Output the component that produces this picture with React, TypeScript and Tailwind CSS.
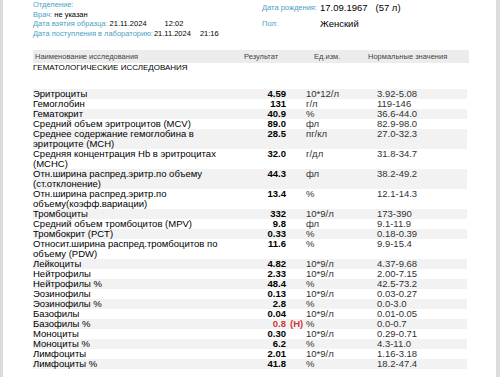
import React from 'react';

type Row = { name: string[]; value: string; flag?: string; unit: string; norm: string };

const rows: Row[] = [
  { name: ['Эритроциты'], value: '4.59', unit: '10*12/л', norm: '3.92-5.08' },
  { name: ['Гемоглобин'], value: '131', unit: 'г/л', norm: '119-146' },
  { name: ['Гематокрит'], value: '40.9', unit: '%', norm: '36.6-44.0' },
  { name: ['Средний объем эритроцитов (MCV)'], value: '89.0', unit: 'фл', norm: '82.9-98.0' },
  { name: ['Среднее содержание гемоглобина в', 'эритроците (MCH)'], value: '28.5', unit: 'пг/кл', norm: '27.0-32.3' },
  { name: ['Средняя концентрация Hb в эритроцитах', '(MCHC)'], value: '32.0', unit: 'г/дл', norm: '31.8-34.7' },
  { name: ['Отн.ширина распред.эритр.по объему', '(ст.отклонение)'], value: '44.3', unit: 'фл', norm: '38.2-49.2' },
  { name: ['Отн.ширина распред.эритр.по', 'объему(коэфф.вариации)'], value: '13.4', unit: '%', norm: '12.1-14.3' },
  { name: ['Тромбоциты'], value: '332', unit: '10*9/л', norm: '173-390' },
  { name: ['Средний объем тромбоцитов (MPV)'], value: '9.8', unit: 'фл', norm: '9.1-11.9' },
  { name: ['Тромбокрит (PCT)'], value: '0.33', unit: '%', norm: '0.18-0.39' },
  { name: ['Относит.ширина распред.тромбоцитов по', 'объему (PDW)'], value: '11.6', unit: '%', norm: '9.9-15.4' },
  { name: ['Лейкоциты'], value: '4.82', unit: '10*9/л', norm: '4.37-9.68' },
  { name: ['Нейтрофилы'], value: '2.33', unit: '10*9/л', norm: '2.00-7.15' },
  { name: ['Нейтрофилы %'], value: '48.4', unit: '%', norm: '42.5-73.2' },
  { name: ['Эозинофилы'], value: '0.13', unit: '10*9/л', norm: '0.03-0.27' },
  { name: ['Эозинофилы %'], value: '2.8', unit: '%', norm: '0.0-3.0' },
  { name: ['Базофилы'], value: '0.04', unit: '10*9/л', norm: '0.01-0.05' },
  { name: ['Базофилы %'], value: '0.8', flag: '(H)', unit: '%', norm: '0.0-0.7' },
  { name: ['Моноциты'], value: '0.30', unit: '10*9/л', norm: '0.29-0.71' },
  { name: ['Моноциты %'], value: '6.2', unit: '%', norm: '4.3-11.0' },
  { name: ['Лимфоциты'], value: '2.01', unit: '10*9/л', norm: '1.16-3.18' },
  { name: ['Лимфоциты %'], value: '41.8', unit: '%', norm: '18.2-47.4' },
];

const Label = ({ children }: { children: React.ReactNode }) => (
  <span className="text-[#4a9ec4] whitespace-nowrap">{children}</span>
);

export default function App() {
  return (
    <div className="flex w-[500px] h-[377px] bg-white overflow-hidden text-black font-['Liberation_Sans',Arial,sans-serif]">
      <div className="w-[3px] bg-[#dcdcdc]" />
      <div className="flex-1 pl-[30px] pr-[26px]">
        {/* patient header */}
        <div className="flex h-[38px] text-[7.5px] leading-[9.5px]">
          <div className="w-[229px]">
            <div><Label>Отделение:</Label></div>
            <div><Label>Врач:</Label> не указан</div>
            <div className="flex whitespace-nowrap">
              <Label>Дата взятия образца:</Label>
              <span className="ml-[2px]">21.11.2024</span>
              <span className="ml-[18px]">12:02</span>
            </div>
            <div className="flex whitespace-nowrap">
              <Label>Дата поступления в лабораторию:</Label>
              <span className="ml-[1px]">21.11.2024</span>
              <span className="ml-[9px]">21:16</span>
            </div>
          </div>
          <div className="pt-[1px]">
            <div className="flex items-center h-[13px]">
              <span className="w-[58px]"><Label>Дата рождения:</Label></span>
              <span className="text-[9.5px] whitespace-nowrap">17.09.1967&nbsp;&nbsp;&nbsp;(57 л)</span>
            </div>
            <div className="flex items-center h-[13px] mt-[3px]">
              <span className="w-[58px]"><Label>Пол:</Label></span>
              <span className="text-[9.5px]">Женский</span>
            </div>
          </div>
        </div>

        {/* table header */}
        <div className="mt-[12px] w-[436px] h-[13px] flex items-center bg-[#ececec] text-[7.5px] text-[#444] whitespace-nowrap">
          <span className="w-[211px] pl-[2px]">Наименование исследования</span>
          <span className="w-[70px]">Результат</span>
          <span className="w-[54px]">Ед.изм.</span>
          <span>Нормальные значения</span>
        </div>
        <div className="text-[8px] leading-[10px] h-[26px]">
          ГЕМАТОЛОГИЧЕСКИЕ ИССЛЕДОВАНИЯ
        </div>

        {/* results */}
        <div className="w-[434px] text-[9.5px] leading-[10px] whitespace-nowrap">
          {rows.map((r, i) => (
            <div key={i} className={`flex ${i % 2 === 0 ? 'bg-[#f2f2f2]' : 'bg-white'}`}>
              <div className="w-[210px]">
                {r.name.map((n, j) => (
                  <div key={j}>{n}</div>
                ))}
              </div>
              <div className={`w-[43px] text-right font-bold ${r.flag ? 'text-[#d23a3a]' : ''}`}>{r.value}</div>
              <div className="w-[20px] pl-[4px] font-bold text-[#d23a3a]">{r.flag}</div>
              <div className="w-[71px] text-[#333]">{r.unit}</div>
              <div className="flex-1 text-[#333]">{r.norm}</div>
            </div>
          ))}
        </div>
      </div>
      <div className="w-[4px] bg-[#dcdcdc]" />
    </div>
  );
}
